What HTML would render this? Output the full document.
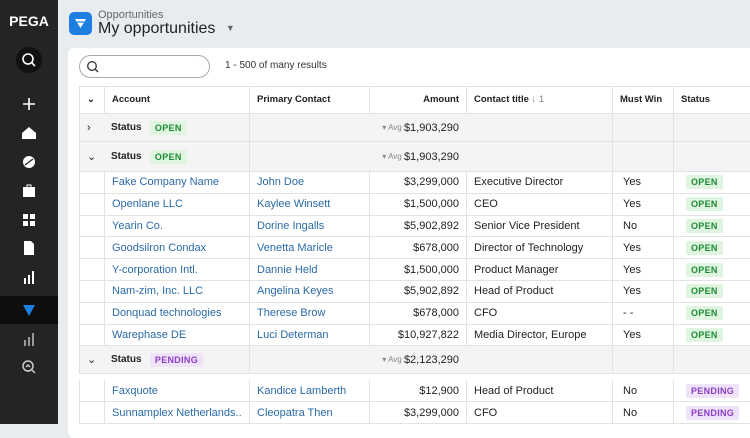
<!DOCTYPE html><html><head><style>
*{box-sizing:border-box;margin:0;padding:0}
body{width:750px;height:424px;overflow:hidden;background:#e9ecef;font-family:"Liberation Sans",sans-serif;position:relative}
.sb{position:absolute;left:0;top:0;width:58px;height:424px;background:#242424}
.sb .logo{position:absolute;top:13px;left:0;width:58px;text-align:center;color:#fff;font-weight:bold;font-size:14px}
.ic{position:absolute;left:19px;width:20px;height:20px}
.card{position:absolute;left:68px;top:48px;width:690px;height:390px;background:#fff;border-radius:6px}
.row{position:absolute;left:79px;width:680px;border-bottom:1px solid #e2e2e2;font-size:11px;color:#222}
.c{position:absolute;top:0;height:100%;display:flex;align-items:center;border-left:1px solid #e2e2e2;padding:0 7px}
.hd{font-weight:bold;font-size:9.5px}
.g{background:#f4f4f4}
.lk{color:#2a6aa6}
.r{justify-content:flex-end}
.b{font-size:9px;font-weight:bold;padding:2px 5px;border-radius:2px;letter-spacing:.3px}
.o{background:#dff5e0;color:#1e8a35}
.p{background:#efe3fa;color:#8a3ec4}
</style></head><body>
<div class="sb"><div class="logo">PEGA</div>
<div style="position:absolute;left:16px;top:47px;width:26px;height:26px;border-radius:50%;background:#111"></div>
<svg class="ic" style="top:50px" viewBox="0 0 20 20"><circle cx="9" cy="9" r="5" stroke="#fff" stroke-width="1.6" fill="none"/><path d="M13 13l3 3" stroke="#fff" stroke-width="1.6"/></svg>
<svg class="ic" style="top:94px" viewBox="0 0 20 20"><path d="M10 4v12M4 10h12" stroke="#fff" stroke-width="1.6"/></svg>
<svg class="ic" style="top:123px" viewBox="0 0 20 20"><path d="M3 10l7-6 7 6v6H3z" fill="#fff"/></svg>
<svg class="ic" style="top:152px" viewBox="0 0 20 20"><circle cx="10" cy="10" r="6" fill="#fff"/><path d="M6 13l8-6" stroke="#242424" stroke-width="1.3"/></svg>
<svg class="ic" style="top:181px" viewBox="0 0 20 20"><rect x="4" y="6" width="12" height="10" fill="#fff"/><rect x="8" y="4" width="4" height="3" fill="none" stroke="#fff"/></svg>
<svg class="ic" style="top:210px" viewBox="0 0 20 20"><rect x="4" y="4" width="5" height="5" fill="#fff"/><rect x="11" y="4" width="5" height="5" fill="#fff"/><rect x="4" y="11" width="5" height="5" fill="#fff"/><rect x="11" y="11" width="5" height="5" fill="#fff"/></svg>
<svg class="ic" style="top:238px" viewBox="0 0 20 20"><path d="M5 3h7l3 3v11H5z" fill="#fff"/></svg>
<svg class="ic" style="top:267px" viewBox="0 0 20 20"><rect x="5" y="11" width="2" height="6" fill="#fff"/><rect x="9" y="8" width="2" height="9" fill="#fff"/><rect x="13" y="4" width="2" height="13" fill="#fff"/></svg>
<div style="position:absolute;left:0;top:296px;width:58px;height:28px;background:#0e0e0e"></div>
<svg class="ic" style="top:300px" viewBox="0 0 20 20"><path d="M4 5h12l-6 11z" fill="#1e7fe0"/></svg>
<svg class="ic" style="top:329px" viewBox="0 0 20 20"><rect x="5" y="11" width="2" height="6" fill="#999"/><rect x="9" y="8" width="2" height="9" fill="#999"/><rect x="13" y="4" width="2" height="13" fill="#999"/></svg>
<svg class="ic" style="top:357px" viewBox="0 0 20 20"><circle cx="9" cy="9" r="5" stroke="#ccc" stroke-width="1.5" fill="none"/><path d="M13 13l3 3M7 10l2-2 2 2" stroke="#ccc" stroke-width="1.5" fill="none"/></svg>
</div>
<div style="position:absolute;left:69px;top:12px;width:23px;height:23px;background:#1e7fe0;border-radius:5px"></div>
<svg style="position:absolute;left:72px;top:15px" width="17" height="17" viewBox="0 0 17 17"><path d="M3 4h11l-5.5 9z" fill="#fff"/><path d="M5 7h7" stroke="#1e7fe0" stroke-width="1.2"/></svg>
<div style="position:absolute;left:98px;top:9px;font-size:11px;color:#666">Opportunities</div>
<div style="position:absolute;left:98px;top:20px;font-size:16px;color:#222">My opportunities <span style="font-size:9px;color:#666;margin-left:6px;vertical-align:2px">▼</span></div>
<div class="card"></div>
<div style="position:absolute;left:79px;top:55px;width:131px;height:23px;border:1px solid #aaa;border-radius:12px"></div>
<svg style="position:absolute;left:86px;top:60px" width="14" height="14" viewBox="0 0 14 14"><circle cx="6" cy="6" r="4.3" stroke="#333" stroke-width="1.3" fill="none"/><path d="M9 9l3 3" stroke="#333" stroke-width="1.3"/></svg>
<div style="position:absolute;left:225px;top:60px;font-size:10px;color:#333">1 - 500 of many results</div>
<div style="position:absolute;left:79px;top:86px;width:680px;border-top:1px solid #e2e2e2"></div>

<div class="row hd" style="top:86px;height:28px;border-left:1px solid #e2e2e2">
<div class="c" style="left:0;width:24px;border:0">⌄</div><div class="c" style="left:24px;width:145px">Account</div><div class="c" style="left:169px;width:120px">Primary Contact</div><div class="c r" style="left:289px;width:97px">Amount</div><div class="c" style="left:386px;width:146px">Contact title&nbsp;<span style="color:#888;font-weight:normal">↓ 1</span></div><div class="c" style="left:532px;width:61px">Must Win</div><div class="c" style="left:593px;width:87px">Status</div></div>

<div class="row g" style="top:114px;height:28px;border-left:1px solid #e2e2e2"><div class="c" style="left:0;width:24px;border:0">›</div><div class="c hd" style="left:24px;width:145px;border:0;font-size:10px">Status&nbsp;&nbsp;&nbsp;<span class="b o">OPEN</span></div><div class="c r" style="left:169px;width:217px"><span style="font-size:8px;color:#888">▾ Avg&nbsp;</span>$1,903,290</div><div class="c" style="left:532px;width:61px"></div><div class="c" style="left:593px;width:87px"></div></div>
<div class="row g" style="top:142px;height:30px;border-left:1px solid #e2e2e2"><div class="c" style="left:0;width:24px;border:0">⌄</div><div class="c hd" style="left:24px;width:145px;border:0;font-size:10px">Status&nbsp;&nbsp;&nbsp;<span class="b o">OPEN</span></div><div class="c r" style="left:169px;width:217px"><span style="font-size:8px;color:#888">▾ Avg&nbsp;</span>$1,903,290</div><div class="c" style="left:532px;width:61px"></div><div class="c" style="left:593px;width:87px"></div></div>

<div id="d"></div>
<script>
var rows=[["Fake Company Name","John Doe","$3,299,000","Executive Director","Yes",0],["Openlane LLC","Kaylee Winsett","$1,500,000","CEO","Yes",0],["Yearin Co.","Dorine Ingalls","$5,902,892","Senior Vice President","No",0],["Goodsilron Condax","Venetta Maricle","$678,000","Director of Technology","Yes",0],["Y-corporation Intl.","Dannie Held","$1,500,000","Product Manager","Yes",0],["Nam-zim, Inc. LLC","Angelina Keyes","$5,902,892","Head of Product","Yes",0],["Donquad technologies","Therese Brow","$678,000","CFO","- -",0],["Warephase DE","Luci Determan","$10,927,822","Media Director, Europe","Yes",0],null,["Faxquote","Kandice Lamberth","$12,900","Head of Product","No",1],["Sunnamplex Netherlands..","Cleopatra Then","$3,299,000","CFO","No",1]];
var h="",t=172;
rows.forEach(function(r){
if(!r){h+='<div class="row g" style="top:'+t+'px;height:28px;border-left:1px solid #e2e2e2"><div class="c" style="left:0;width:24px;border:0">⌄</div><div class="c hd" style="left:24px;width:145px;border:0;font-size:10px">Status&nbsp;&nbsp;&nbsp;<span class="b p">PENDING</span></div><div class="c r" style="left:169px;width:217px"><span style="font-size:8px;color:#888">▾ Avg&nbsp;</span>$2,123,290</div><div class="c" style="left:532px;width:61px"></div><div class="c" style="left:593px;width:87px"></div></div>';t+=34;return;}
h+='<div class="row" style="top:'+t+'px;height:21.8px;border-left:1px solid #e2e2e2"><div class="c lk" style="left:24px;width:145px">'+r[0]+'</div><div class="c lk" style="left:169px;width:120px">'+r[1]+'</div><div class="c r" style="left:289px;width:97px">'+r[2]+'</div><div class="c" style="left:386px;width:146px">'+r[3]+'</div><div class="c" style="left:532px;width:61px;padding-left:10px">'+r[4]+'</div><div class="c" style="left:593px;width:87px;padding-left:12px">'+(r[5]?'<span class="b p">PENDING</span>':'<span class="b o">OPEN</span>')+'</div></div>';t+=21.8;});
document.getElementById("d").innerHTML=h;
</script>
</body></html>
